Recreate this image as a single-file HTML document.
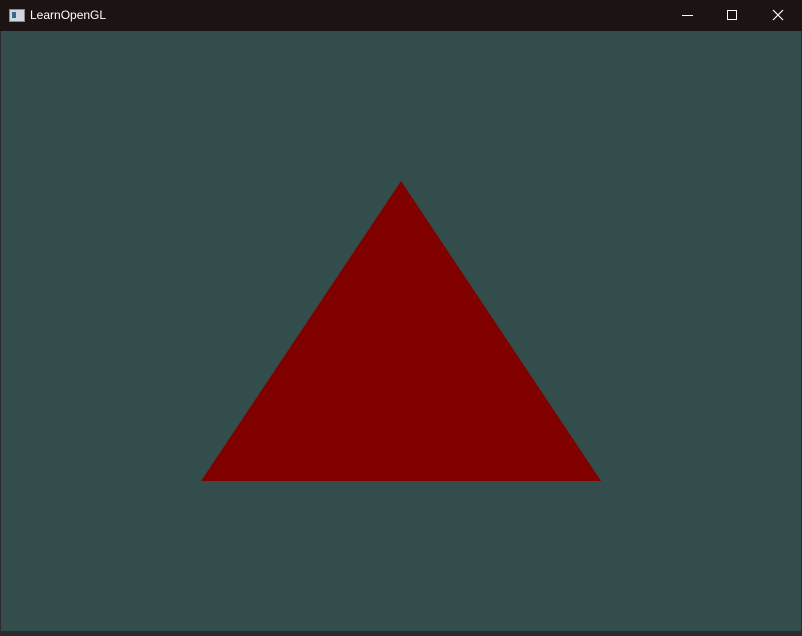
<!DOCTYPE html>
<html><head><style>
html,body{margin:0;padding:0;width:802px;height:632px;overflow:hidden;background:#2b2b2b}
.bar{position:absolute;left:0;top:0;width:802px;height:31px;background:#1c1313}
.title{position:absolute;left:30px;top:8px;color:#fff;font:12px "Liberation Sans",sans-serif}
.ico{position:absolute;left:9px;top:9px;width:14px;height:11px;background:#cfd8dc;border:1px solid #889}
.ico:before{content:"";position:absolute;left:2px;top:2px;width:4px;height:6px;background:#3a6a8a}
.view{position:absolute;left:1px;top:31px;width:800px;height:600px;background:#334d4d}
</style></head><body>
<div class="bar">
<div class="ico"></div>
<div class="title">LearnOpenGL</div>
<svg width="802" height="31" style="position:absolute;left:0;top:0">
<line x1="682" y1="15.5" x2="693" y2="15.5" stroke="#fff" stroke-width="1"/>
<rect x="727.5" y="10.5" width="9" height="9" fill="none" stroke="#fff"/>
<path d="M773 10 L783 20 M783 10 L773 20" stroke="#fff" stroke-width="1.2"/>
</svg>
</div>
<div class="view">
<svg width="800" height="600"><polygon points="400,150 200,450 600,450" fill="#800000"/></svg>
</div>
</body></html>
